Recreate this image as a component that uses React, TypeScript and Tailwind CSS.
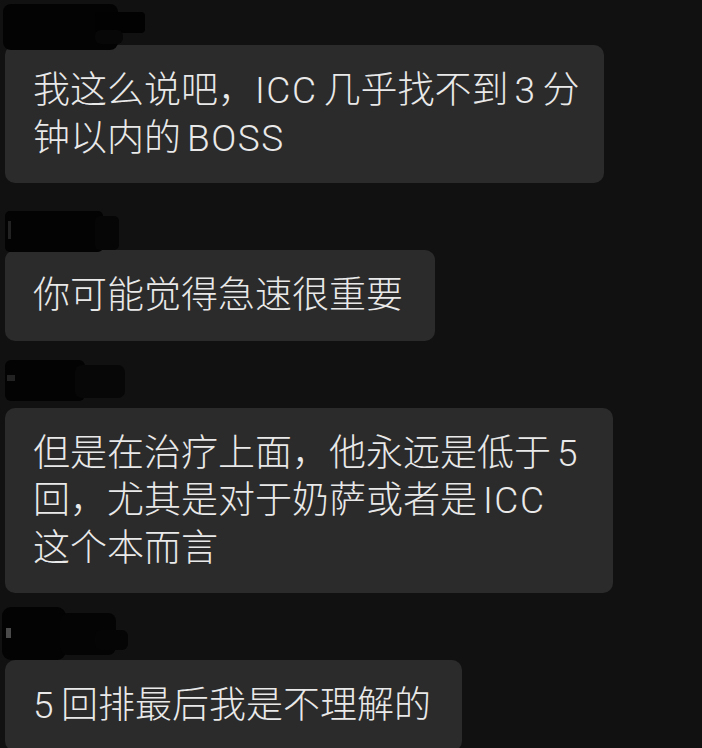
import React from "react";

const G = () => <i className="inline-block w-[6px]" />;
const L = ({ children }: { children: React.ReactNode }) => (
  <span className="tracking-[1.5px]">{children}</span>
);

function Redacted({ children }: { children: React.ReactNode }) {
  return <div className="relative h-[45px] w-[150px]">{children}</div>;
}

function Message({
  name,
  w,
  children,
}: {
  name: React.ReactNode;
  w: string;
  children: React.ReactNode;
}) {
  return (
    <div className="flex flex-col items-start">
      <Redacted>{name}</Redacted>
      <div
        className={`ml-[5px] ${w} rounded-[10px] bg-[#2b2b2b] pl-[28px] pt-[22px] pb-[21px] text-[37px] font-light leading-[47.5px] text-[#e9e9e9] whitespace-nowrap`}
      >
        {children}
      </div>
    </div>
  );
}

export default function App() {
  return (
    <div
      className="flex h-[748px] w-[702px] flex-col gap-[22px] overflow-hidden bg-[#111111]"
      style={{ fontFamily: 'Roboto, "Noto Sans CJK SC", sans-serif' }}
    >
      <Message
        w="w-[599px]"
        name={
          <>
            <span className="absolute left-[7px] top-[18px] text-[15px] text-[#6a6a6a]">G</span>
            <div className="absolute left-[3px] top-[4px] h-[46px] w-[115px] rounded-[8px] bg-[#030303]" />
            <div className="absolute left-[95px] top-[12px] h-[21px] w-[50px] rounded-[4px] bg-[#020202]" />
            <div className="absolute left-[95px] top-[30px] h-[14px] w-[28px] rounded-[6px] bg-[#070707]" />
          </>
        }
      >
        我这么说吧，<L>ICC</L>
        <G />几乎找不到<G />
        <L>3</L>
        <G />分
        <br />
        钟以内的<G />
        <L>BOSS</L>
      </Message>

      <Message
        w="w-[430px]"
        name={
          <>
            <div className="absolute left-[5px] top-[6px] h-[41px] w-[98px] rounded-[5px] bg-[#030303]" />
            <div className="absolute left-[95px] top-[11px] h-[34px] w-[24px] rounded-[5px] bg-[#060606]" />
            <span className="absolute left-[8px] top-[16px] h-[18px] w-[3px] bg-[#222222]" />
          </>
        }
      >
        你可能觉得急速很重要
      </Message>

      <Message
        w="w-[608px]"
        name={
          <>
            <div className="absolute left-[5px] top-[-3px] h-[41px] w-[80px] rounded-[6px] bg-[#030303]" />
            <div className="absolute left-[75px] top-[2px] h-[33px] w-[50px] rounded-[7px] bg-[#070707]" />
            <span className="absolute left-[7px] top-[12px] h-[6px] w-[8px] bg-[#222222]" />
          </>
        }
      >
        但是在治疗上面，他永远是低于<G />
        <L>5</L>
        <br />
        回，尤其是对于奶萨或者是<G />
        <L>ICC</L>
        <br />
        这个本而言
      </Message>

      <Message
        w="w-[457px]"
        name={
          <>
            <div className="absolute left-[2px] top-[-8px] h-[53px] w-[64px] rounded-[9px] bg-[#030303]" />
            <div className="absolute left-[60px] top-[-2px] h-[42px] w-[56px] rounded-[8px] bg-[#040404]" />
            <div className="absolute left-[95px] top-[15px] h-[20px] w-[33px] rounded-[6px] bg-[#050505]" />
            <span className="absolute left-[6px] top-[13px] h-[10px] w-[5px] bg-[#4a4a4a]" />
          </>
        }
      >
        <L>5</L>
        <G />回排最后我是不理解的
      </Message>
    </div>
  );
}
